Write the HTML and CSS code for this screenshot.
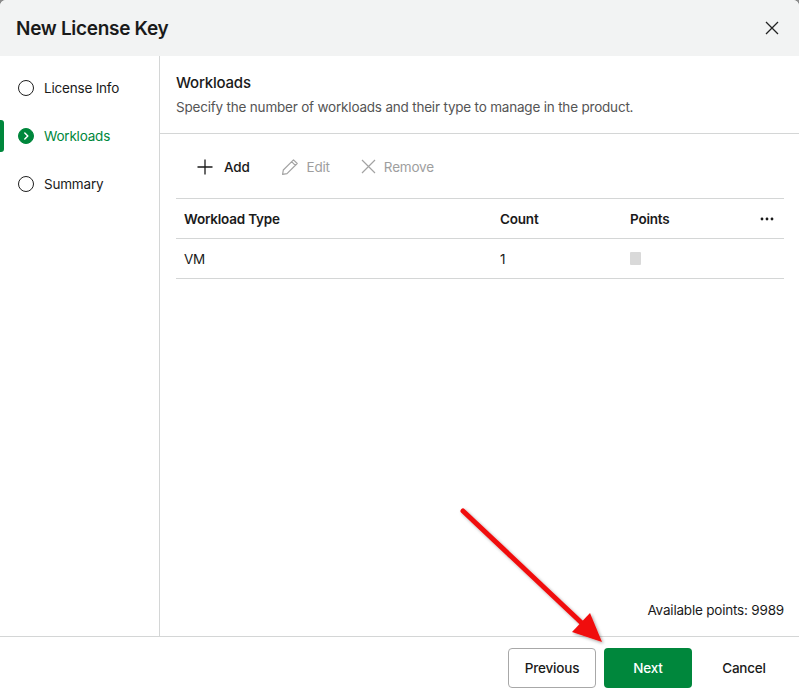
FILE: index.html
```html
<!DOCTYPE html>
<html lang="en">
<head>
<meta charset="utf-8">
<title>New License Key</title>
<link rel="stylesheet" href="styles.css">
</head>
<body>
<div class="dialog">
  <header class="dlg-header">
    <h1 class="dlg-title">New License Key</h1>
    <button class="close-btn" aria-label="Close">
      <svg width="14" height="14" viewBox="0 0 14 14"><path d="M1 1L13 13M13 1L1 13" stroke="#222" stroke-width="1.3" fill="none"/></svg>
    </button>
  </header>
  <div class="dlg-body">
    <nav class="steps">
      <div class="step">
        <span class="step-circle"></span>
        <span class="step-label">License Info</span>
      </div>
      <div class="step step-active">
        <span class="step-bar"></span>
        <span class="step-circle step-circle-active">
          <svg width="16" height="16" viewBox="0 0 16 16"><path d="M6.8 5L9.8 8L6.8 11" stroke="#fff" stroke-width="1.5" fill="none" stroke-linecap="round" stroke-linejoin="round"/></svg>
        </span>
        <span class="step-label">Workloads</span>
      </div>
      <div class="step">
        <span class="step-circle"></span>
        <span class="step-label">Summary</span>
      </div>
    </nav>
    <main class="main">
      <section class="intro">
        <h2 class="intro-title">Workloads</h2>
        <p class="intro-text">Specify the number of workloads and their type to manage in the product.</p>
      </section>
      <section class="content">
        <div class="toolbar">
          <button class="tb-btn">
            <svg width="16" height="16" viewBox="0 0 16 16"><path d="M8 0.5V15.5M0.5 8H15.5" stroke="#1a1a1a" stroke-width="1.3" fill="none"/></svg>
            <span>Add</span>
          </button>
          <button class="tb-btn tb-disabled">
            <svg width="18" height="18" viewBox="0 0 18 18"><path d="M12.5 1.8L16.2 5.5L6 15.7L1.6 16.4L2.3 12Z M10.6 3.7L14.3 7.4" stroke="#a3a3a3" stroke-width="1.2" fill="none" stroke-linejoin="round"/></svg>
            <span>Edit</span>
          </button>
          <button class="tb-btn tb-disabled">
            <svg width="15" height="15" viewBox="0 0 15 15"><path d="M1 1L14 14M14 1L1 14" stroke="#a3a3a3" stroke-width="1.2" fill="none"/></svg>
            <span>Remove</span>
          </button>
        </div>
        <table class="grid">
          <thead>
            <tr>
              <th class="col-type">Workload Type</th>
              <th class="col-count">Count</th>
              <th class="col-points">Points</th>
              <th class="col-more">
                <svg width="14" height="4" viewBox="0 0 14 4"><circle cx="2" cy="2" r="1.4" fill="#1a1a1a"/><circle cx="7" cy="2" r="1.4" fill="#1a1a1a"/><circle cx="12" cy="2" r="1.4" fill="#1a1a1a"/></svg>
              </th>
            </tr>
          </thead>
          <tbody>
            <tr>
              <td>VM</td>
              <td>1</td>
              <td><span class="blur-box"></span></td>
              <td></td>
            </tr>
          </tbody>
        </table>
        <div class="spacer"></div>
        <div class="avail">Available points: 9989</div>
      </section>
    </main>
  </div>
  <footer class="dlg-footer">
    <button class="btn btn-outline">Previous</button>
    <button class="btn btn-primary">Next</button>
    <button class="btn btn-link">Cancel</button>
  </footer>
  <svg class="annotation" width="799" height="698" viewBox="0 0 799 698">
    <defs>
      <filter id="sh" x="-20%" y="-20%" width="140%" height="140%">
        <feDropShadow dx="1.5" dy="1.5" stdDeviation="1.5" flood-color="#000" flood-opacity="0.35"/>
      </filter>
    </defs>
    <g filter="url(#sh)">
      <line x1="463" y1="511" x2="586" y2="627" stroke="#f01010" stroke-width="5" stroke-linecap="round"/>
      <polygon points="602,642 572,632 590,613" fill="#f01010"/>
    </g>
  </svg>
</div>
</body>
</html>
```

FILE: styles.css
```css
* { box-sizing: border-box; }
html, body {
  margin: 0;
  padding: 0;
  width: 799px;
  height: 698px;
  overflow: hidden;
  background: #8a8a8a;
  font-family: Inter, "Noto Sans", "Liberation Sans", sans-serif;
  color: #1a1a1a;
  font-size: 13.5px;
  letter-spacing: -0.2px;
}
button {
  font-family: inherit;
  font-size: 13.5px;
  letter-spacing: -0.2px;
  background: none;
  border: none;
  padding: 0;
  margin: 0;
  color: inherit;
  cursor: pointer;
}
.dialog {
  position: relative;
  width: 799px;
  height: 698px;
  background: #fff;
  border-radius: 6px 6px 0 0;
  display: flex;
  flex-direction: column;
  overflow: hidden;
}
.dlg-header {
  height: 56px;
  flex: none;
  background: #f2f3f3;
  display: flex;
  align-items: center;
  justify-content: space-between;
  padding: 0 20px 0 16px;
}
.dlg-title {
  margin: 0;
  font-size: 19px;
  font-weight: 600;
  letter-spacing: -0.3px;
  color: #1a1a1a;
}
.close-btn {
  width: 14px;
  height: 14px;
  display: flex;
}
.dlg-body {
  flex: 1;
  display: flex;
  min-height: 0;
}
.steps {
  width: 160px;
  flex: none;
  border-right: 1px solid #d4d6d6;
  padding-top: 8px;
  display: flex;
  flex-direction: column;
}
.step {
  position: relative;
  height: 48px;
  display: flex;
  align-items: center;
  padding-left: 18px;
  gap: 10px;
}
.step-circle {
  width: 16px;
  height: 16px;
  border-radius: 50%;
  border: 1.5px solid #1f1f1f;
  flex: none;
  display: flex;
  align-items: center;
  justify-content: center;
}
.step-circle-active {
  background: #00873c;
  border-color: #00873c;
}
.step-circle-active svg { flex: none; }
.step-label {
  color: #1a1a1a;
  line-height: 16px;
}
.step-active .step-label { color: #00873c; }
.step-bar {
  position: absolute;
  left: 0;
  top: 8px;
  width: 4px;
  height: 32px;
  background: #00873c;
  border-radius: 0 3px 3px 0;
}
.main {
  flex: 1;
  display: flex;
  flex-direction: column;
  min-width: 0;
}
.intro {
  padding: 16px 16px 16px 16px;
  border-bottom: 1px solid #d4d6d6;
}
.intro-title {
  margin: 0;
  font-size: 15px;
  font-weight: 500;
  line-height: 22px;
  color: #1a1a1a;
}
.intro-text {
  margin: 3px 0 0;
  line-height: 20px;
  color: #555;
}
.content {
  flex: 1;
  display: flex;
  flex-direction: column;
  padding: 0 15px 16px 16px;
}
.toolbar {
  height: 64px;
  padding-top: 1px;
  display: flex;
  align-items: center;
  padding-left: 21px;
  gap: 31px;
}
.tb-btn {
  display: flex;
  align-items: center;
  gap: 11px;
  color: #1a1a1a;
  font-weight: 500;
  line-height: 20px;
}
.tb-btn svg { flex: none; }
.tb-disabled { color: #9e9e9e; font-weight: 400; gap: 8px; }
.grid {
  width: 100%;
  table-layout: fixed;
  border-collapse: collapse;
  border-top: 1px solid #d4d6d6;
}
.grid th, .grid td {
  height: 40px;
  padding: 0 8px;
  text-align: left;
  border-bottom: 1px solid #d4d6d6;
  vertical-align: middle;
}
.grid th { font-weight: 600; color: #1a1a1a; }
.grid td { font-weight: 400; color: #1a1a1a; }
.col-type { width: 316px; }
.col-count { width: 130px; }
.col-points { width: 122px; }
.col-more { width: 40px; }
.grid th.col-more { padding-right: 10px; }
.col-more svg { display: block; margin-left: auto; }
.blur-box {
  display: inline-block;
  width: 11px;
  height: 13px;
  background: #d9d9d9;
  border-radius: 1px;
  filter: blur(0.6px);
  vertical-align: middle;
  margin-top: -2px;
}
.spacer { flex: 1; }
.avail {
  text-align: right;
  line-height: 20px;
  color: #1a1a1a;
}
.dlg-footer {
  height: 62px;
  flex: none;
  border-top: 1px solid #d4d6d6;
  display: flex;
  align-items: center;
  justify-content: flex-end;
  padding: 0 13px 0 0;
  gap: 8px;
}
.btn {
  height: 40px;
  border-radius: 4px;
  font-weight: 500;
}
.btn-outline {
  width: 88px;
  border: 1px solid #a8a8a8;
  background: #fff;
  color: #1a1a1a;
}
.btn-primary {
  width: 88px;
  background: #00873c;
  color: #fff;
}
.btn-link {
  width: 84px;
  margin-left: 2px;
  color: #1a1a1a;
}
.annotation {
  position: absolute;
  left: 0;
  top: 0;
  pointer-events: none;
}
```
